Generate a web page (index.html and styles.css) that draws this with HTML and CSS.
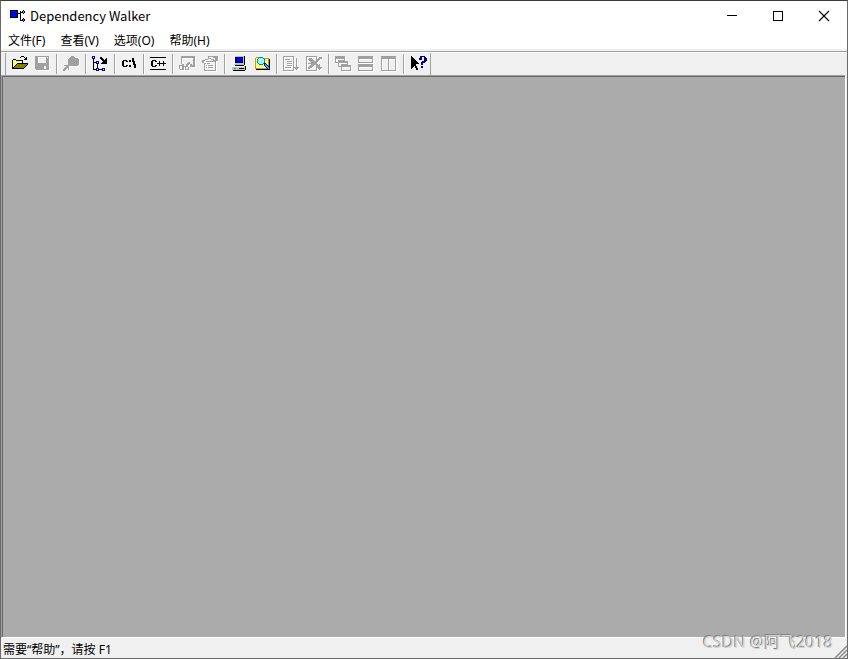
FILE: index.html
```
<!DOCTYPE html>
<html lang="zh-CN">
<head>
  <meta charset="UTF-8" />
  <meta name="viewport" content="width=device-width, initial-scale=1" />
  <title>Dependency Walker</title>
  <link rel="stylesheet" href="styles.css">
</head>
<body>

<div class="window">
  <!-- title bar -->
  <header class="titlebar">
    <svg class="app-icon" viewBox="0 0 16 16" shape-rendering="crispEdges">
      <path fill="#000" d="M0 2h8v8h-8zM8 5h2v1h-2zM10 3h1v10h-1zM11 4h2v1h-2zM11 12h2v1h-2z"/>
      <path fill="#00f" d="M1 3h6v6h-6z"/>
      <path fill="#000" d="M13 2h1v1h1v2h-1v1h-1v-1h-1v-2h1zM13 10h1v1h1v2h-1v1h-1v-1h-1v-2h1z"/>
      <path fill="#0cc" d="M13 3h1v2h-1z"/>
      <path fill="#f0f" d="M13 11h1v2h-1z"/>
    </svg>
    <h1>Dependency Walker</h1>
    <div class="window-buttons">
      <button type="button" aria-label="最小化"><svg viewBox="0 0 10 10" shape-rendering="crispEdges"><path d="M0 4h10v1h-10z"/></svg></button>
      <button type="button" aria-label="最大化"><svg viewBox="0 0 10 10" shape-rendering="crispEdges"><path fill-rule="evenodd" d="M0 0h10v10h-10zM1 1v8h8v-8z"/></svg></button>
      <button type="button" aria-label="关闭"><svg viewBox="0 0 10 10"><path d="M0 0l10 10M10 0l-10 10" stroke="#000" stroke-width="1.1"/></svg></button>
    </div>
  </header>

  <!-- menu -->
  <nav class="menubar">
    <button type="button">文件(F)</button>
    <button type="button">查看(V)</button>
    <button type="button">选项(O)</button>
    <button type="button">帮助(H)</button>
  </nav>

  <!-- toolbar -->
  <div class="toolbar" role="toolbar">
    <button type="button" aria-label="打开">
      <svg viewBox="-1 0 16 16" shape-rendering="crispEdges">
        <path fill="#ffff80" d="M1 4h3v1h7v4h-6l-4 4h-1v-8z"/>
        <path fill="#808000" d="M5 8h10v1h-1v1h-1v1h-1v1h-1v1h-10v-1h1v-1h1v-1h1v-1h1z"/>
        <path d="M9 0h3v1h-3zM8 1h1v1h-1zM12 1h1v1h-1zM14 1h1v3h-3v-1h1v-1h1zM1 3h3v1h-3zM0 4h1v9h-1zM4 4h7v1h-7zM10 5h1v2h-1zM5 7h11v1h-11zM4 8h1v1h-1zM15 8h1v1h-1zM3 9h1v1h-1zM14 9h1v1h-1zM2 10h1v1h-1zM13 10h1v1h-1zM1 11h1v1h-1zM12 11h1v1h-1zM0 12h12v1h-12z"/>
      </svg>
    </button>
    <button type="button" aria-label="保存" disabled>
      <svg viewBox="-1 0 16 16" shape-rendering="crispEdges">
        <path fill-rule="evenodd" d="M0 0h14v14h-13l-1 -1zM3 1v6h8v-6zM9 10v3h2v-3zM12 1v1h1v-1z"/>
      </svg>
    </button>
    <span class="sep"></span>
    <button type="button" aria-label="自动展开" disabled>
      <svg viewBox="0 0 16 16" shape-rendering="crispEdges">
        <path d="M8 0h3v1h1v1h3v1h1v6h-1v1h-9v-1h-1v-6h1v-1h1v-1h1zM1 9h5v5h-1v-2h-1v1h-1v1h-1v1h-2v-2h1v-1h1v-1h1v-1h-2z"/>
      </svg>
    </button>
    <span class="sep"></span>
    <button type="button" aria-label="完整路径树">
      <svg viewBox="0 0 16 16" shape-rendering="crispEdges">
        <path d="M1 3h1v11h-1zM2 6h2v1h-2zM2 13h2v1h-2zM5 8h1v4h-1zM7 13h3v1h-3zM8 1h2v1h1v1h1v1h1v-1h1v-1h1v6h-6v-1h1v-1h1v-1h-1v-1h-1v-1h-1z"/>
        <path fill="#000080" d="M0 0h3v3h-3zM4 5h3v3h-3zM4 12h3v3h-3zM10 12h3v3h-3z"/>
        <path fill="#00f" d="M0 0h3v1h-3zM4 5h3v1h-3zM4 12h3v1h-3zM10 12h3v1h-3z"/>
        <path fill="#fff" d="M1 1h1v1h-1zM5 6h1v1h-1zM5 13h1v1h-1zM11 13h1v1h-1z"/>
      </svg>
    </button>
    <span class="sep"></span>
    <button type="button" aria-label="显示完整路径">
      <svg viewBox="0 0 16 16" shape-rendering="crispEdges">
        <path d="M2 4h4v1h1v1h-2v-1h-2v5h2v-1h2v1h-1v1h-4v-1h-1v-5h1zM8 4h2v2h-2zM8 9h2v2h-2zM11 2h2v3h1v3h1v4h-2v-3h-1v-3h-1z"/>
      </svg>
    </button>
    <span class="sep"></span>
    <button type="button" aria-label="还原 C++ 名称">
      <svg viewBox="0 0 16 16" shape-rendering="crispEdges">
        <path d="M0 1h16v1h-16zM0 13h16v1h-16zM2 4h4v1h1v1h-2v-1h-2v5h2v-1h2v1h-1v1h-4v-1h-1v-5h1zM7 7h9v1h-9zM9 5h1v5h-1zM13 5h1v5h-1z"/>
      </svg>
    </button>
    <span class="sep"></span>
    <button type="button" aria-label="查看模块" disabled>
      <svg viewBox="0 0 16 16" shape-rendering="crispEdges">
        <path fill-rule="evenodd" d="M2 0h14v11h-3v-2h1v-7h-11v6h-1zM0 9h3v-1h2v2h2v-2h1v-1h1v-1h2v2h2v3h-2v-3h-1v1h-1v2h1v3h-4v-3h-1v3h-4v-1h-1zM1 10v3h2v-3zM7 11v2h2v-2z"/>
      </svg>
    </button>
    <button type="button" aria-label="属性" disabled>
      <svg viewBox="0 0 16 16" shape-rendering="crispEdges">
        <path fill-rule="evenodd" d="M6 0h10v5h-2v10h-12v-8h-2v-3h3v-1h3zM7 1v1h2v1h-3v1h-3v1h-1v2h2v1h-1v6h10v-8h-3v-1h2v-1h3v-2z"/>
        <path d="M4 5h6v1h-6zM5 7h3v1h-3zM4 9h1v1h-1zM6 9h5v1h-5zM4 11h1v1h-1zM6 11h5v1h-5zM9 3h3v1h-3zM11 4h2v2h-2zM13 1h2v3h-2z"/>
      </svg>
    </button>
    <span class="sep"></span>
    <button type="button" aria-label="系统信息">
      <svg viewBox="-1 0 16 16" shape-rendering="crispEdges">
        <path fill="#c0c0c0" d="M2 0h10v9h-10zM0 10h13v4h-13z"/>
        <path d="M12 0h1v9h-1zM3 9h9v1h-9zM13 10h1v4h-1zM1 14h12v1h-12z"/>
        <path fill="#fff" d="M2 0h1v8h-1zM0 10h12v1h-12z"/>
        <path fill="#000080" d="M3 1h8v6h-8z"/>
        <path fill="#00f" d="M5 2h5v3h-5z"/>
        <path fill="#0c0" d="M2 12h2v1h-2z"/>
        <path d="M7 12h5v1h-5z"/>
      </svg>
    </button>
    <button type="button" aria-label="搜索顺序">
      <svg viewBox="-1 0 16 16" shape-rendering="crispEdges">
        <path fill="#c0a000" d="M0 2h1v-1h5v1h8v11h-14z"/>
        <path fill="#ffff80" d="M1 2h5v1h7v9h-12z"/>
        <path d="M14 3h1v11h-14v-1h13z"/>
        <path fill="#0080a0" d="M4 1h4v1h1v1h1v4h-1v1h-1v1h-4v-1h-1v-1h-1v-4h1v-1h1z"/>
        <path fill="#8ff" d="M4 2h4v1h1v4h-1v1h-4v-1h-1v-4h1z"/>
        <path fill="#fff" d="M4 3h2v2h-2z"/>
        <path fill="#000080" d="M9 7h2v1h1v1h1v1h1v1h1v3h-2v-1h-1v-1h-1v-1h-1v-1h-1z"/>
        <path fill="#0cf" d="M10 8h1v1h1v1h1v1h1v2h-1v-1h-1v-1h-1v-1h-1z"/>
      </svg>
    </button>
    <span class="sep"></span>
    <button type="button" aria-label="开始分析" disabled>
      <svg viewBox="0 0 16 16" shape-rendering="crispEdges">
        <path fill-rule="evenodd" d="M0 0h11v15h-11zM1 1v13h9v-13z"/>
        <path d="M2 3h5v1h-5zM4 5h5v1h-5zM4 7h5v1h-5zM4 9h5v1h-5zM2 11h6v1h-6zM13 2h1v9h2v1h-1v1h-1v1h-1v-1h-1v-1h-1v-1h2z"/>
      </svg>
    </button>
    <button type="button" aria-label="停止分析" disabled>
      <svg viewBox="0 0 16 16" shape-rendering="crispEdges">
        <path fill-rule="evenodd" d="M0 0h11v15h-11zM1 1v13h9v-13z"/>
        <path d="M2 3h4v1h-4zM2 7h4v1h-4zM2 11h3v1h-3zM13 8h1v3h2v1h-1v1h-1v1h-1v-1h-1v-1h-1v-1h2zM3 2h3v1h1v1h1v1h2v-1h1v-1h1v-1h1v-1h3v2h-2v1h-1v1h-1v1h-1v2h1v1h1v1h1v1h-3v-1h-1v-1h-2v1h-1v1h-1v1h-2v1h-2v-2h1v-1h1v-1h1v-1h1v-1h-1v-1h-1v-1h-1v-1h-1z"/>
      </svg>
    </button>
    <span class="sep"></span>
    <button type="button" aria-label="层叠" disabled>
      <svg viewBox="0 0 16 16" shape-rendering="crispEdges">
        <path fill-rule="evenodd" d="M0 0h10v5h3v4h3v6h-10v-4h-3v-4h-3zM1 3v3h2v-2h6v-1zM4 7v3h2v-2h6v-1zM7 11v3h8v-3z"/>
      </svg>
    </button>
    <button type="button" aria-label="横向平铺" disabled>
      <svg viewBox="0 0 16 16" shape-rendering="crispEdges">
        <path fill-rule="evenodd" d="M0 0h15v7h-15zM1 3v3h13v-3zM0 8h15v7h-15zM1 11v3h13v-3z"/>
      </svg>
    </button>
    <button type="button" aria-label="纵向平铺" disabled>
      <svg viewBox="0 0 16 16" shape-rendering="crispEdges">
        <path fill-rule="evenodd" d="M0 0h15v15h-15zM1 3v11h6v-11zM8 3v11h6v-11z"/>
      </svg>
    </button>
    <span class="sep"></span>
    <button type="button" aria-label="帮助">
      <svg viewBox="-1 0 16 16" shape-rendering="crispEdges">
        <path d="M0 0h1v1h1v1h1v1h1v1h1v1h1v1h1v1h1v1h-3v2h1v2h1v2h-2v-2h-1v-2h-1v1h-1v1h-1v1h-1z"/>
        <path fill="#000080" d="M9 0h5v1h1v1h1v3h-1v1h-1v1h-2v2h-2v-3h1v-1h2v-4h-2v3h-3v-2h1zM10 10h2v2h-2z"/>
      </svg>
    </button>
  </div>

  <main class="workspace"></main>

  <footer class="statusbar">
    <span>需要“帮助”，请按 F1</span>
    <svg class="grip" viewBox="0 0 12 12">
      <path d="M0 12L12 0M4 12L12 4M8 12L12 8" stroke="#8a8a8a" stroke-width="1.5"/>
    </svg>
  </footer>

  <div class="watermark">CSDN @阿飞2018</div>
</div>

</body>
</html>
```
FILE: styles.css
```
* { margin: 0; padding: 0; box-sizing: border-box; }

body {
  font-family: "Noto Sans", "Noto Sans CJK SC", sans-serif;
  font-size: 12px;
  color: #000;
}

button {
  font: inherit;
  color: inherit;
  background: none;
  border: none;
}

svg {
  display: block;
  overflow: visible;
}

.window {
  position: relative;
  display: flex;
  flex-direction: column;
  min-height: 100vh;
  border: 1px solid #6a6a6a;
  border-top-color: #3c3c3c;
  background: #f0f0f0;
}

/* title bar */
.titlebar {
  display: flex;
  align-items: center;
  height: 30px;
  padding-left: 9px;
  background: #fff;
}
.app-icon {
  width: 16px;
  height: 16px;
}
.titlebar h1 {
  flex: 1;
  margin-left: 4px;
  font-family: "Noto Sans CJK SC", sans-serif;
  font-size: 13px;
  font-weight: normal;
  line-height: 20px;
}
.window-buttons { display: flex; }
.window-buttons button {
  display: flex;
  align-items: center;
  justify-content: center;
  width: 46px;
  height: 30px;
}
.window-buttons svg {
  width: 10px;
  height: 10px;
}

/* menu */
.menubar {
  display: flex;
  height: 18px;
  gap: 15px;
  padding-left: 7px;
  background: #fff;
}
.menubar button { line-height: 20px; }

/* toolbar */
.toolbar {
  display: flex;
  height: 24px;
  margin-top: 2px;
  padding: 1px 0 0 7px;
  border-top: 1px solid #a0a0a0;
  box-shadow: inset 0 1px 0 #fff;
}
.toolbar::before {
  content: "";
  width: 1px;
  margin-left: -3px;
  margin-right: 2px;
  background: #a0a0a0;
}
.toolbar button {
  width: 23px;
  height: 22px;
  padding: 3px 4px 3px 3px;
}
.toolbar svg {
  width: 16px;
  height: 16px;
}
.toolbar button:disabled svg {
  fill: #a0a0a0;
  filter: drop-shadow(1px 1px 0 #fff);
}
.sep {
  width: 2px;
  height: 20px;
  margin: 1px 2px 0;
  border-left: 1px solid #a0a0a0;
  border-right: 1px solid #fff;
}
.toolbar::after {
  content: "";
  width: 1px;
  background: #a0a0a0;
}

/* empty client area */
.workspace {
  flex: 1;
  margin-right: 1px;
  border: 1px solid #a0a0a0;
  border-right-color: #fff;
  border-bottom-color: #fff;
  background: #ababab;
  box-shadow: inset 1px 1px 0 #696969;
}

.statusbar {
  display: flex;
  justify-content: space-between;
  align-items: flex-end;
  height: 20px;
  padding-left: 2px;
}
.statusbar span { line-height: 16px; }
.grip {
  width: 12px;
  height: 12px;
}

.watermark {
  position: absolute;
  right: 14px;
  bottom: 4px;
  font-size: 16px;
  line-height: 24px;
  color: #d2d2d2;
  text-shadow: -1px -1px 0 #858585;
}
```
